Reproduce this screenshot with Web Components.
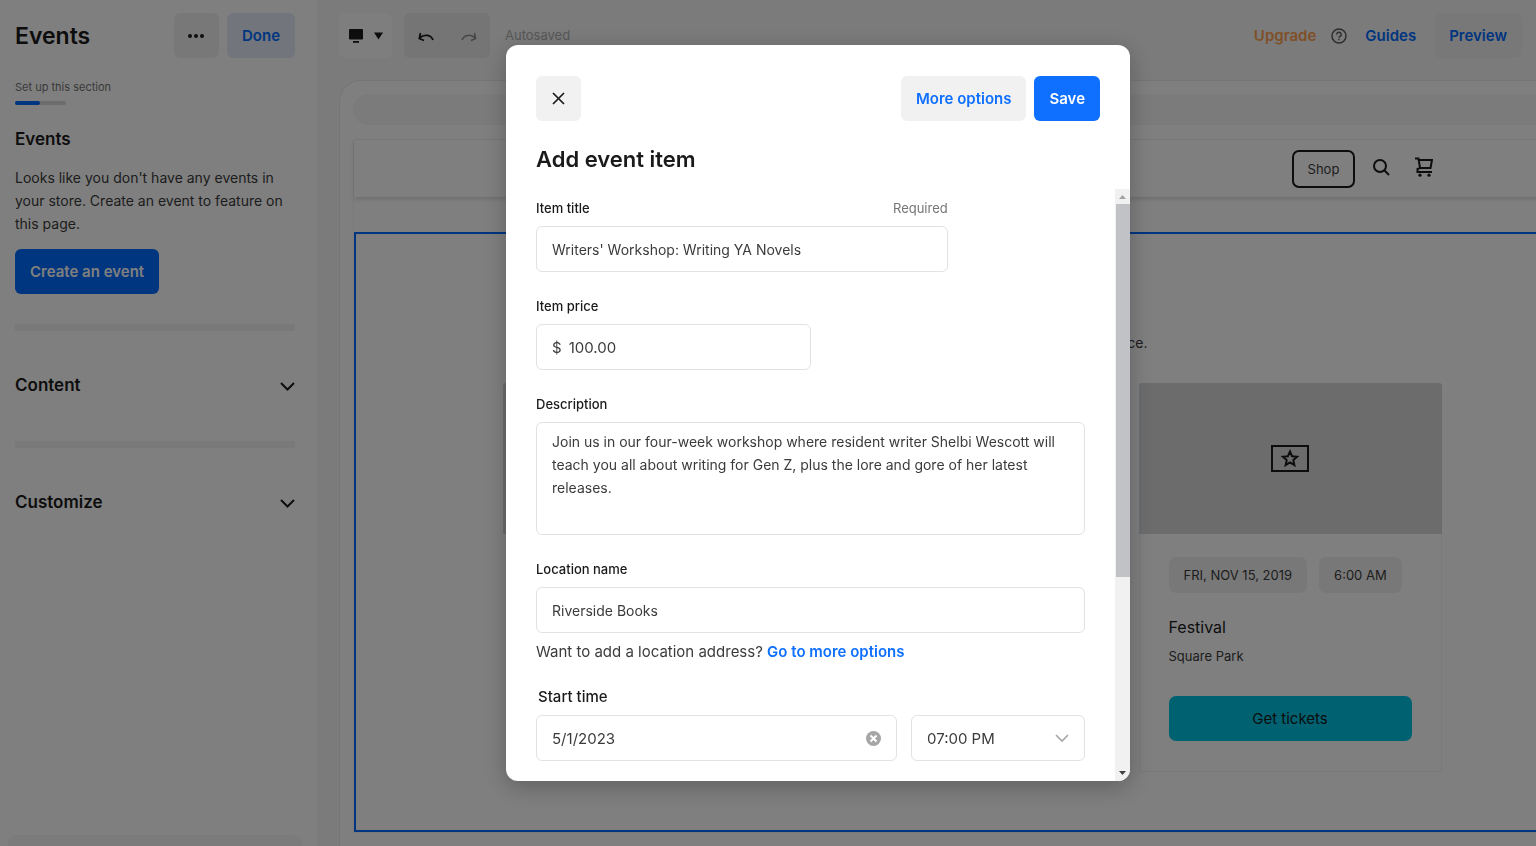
<!DOCTYPE html>
<html lang="en">
<head>
<meta charset="utf-8">
<title>Events - Site editor</title>
<style>
	html, body { height: 100%; }
	body {
		--accent: #006aff;
		margin: 0;
		overflow: hidden;
		font-family: Inter, "Liberation Sans", sans-serif;
		font-size: 15px;
		line-height: 23px;
		color: #1a1a1a;
		background: #fff;
	}
	.app { display: flex; height: 100%; }
	modal-dialog { --accent: #0f70ff; }
</style>
</head>
<body>

<div class="app">
	<side-panel heading="Events">
		<setup-card heading="Events" action="Create an event">Looks like you don't have any events in your store. Create an event to feature on this page.</setup-card>
		<panel-section>Content</panel-section>
		<panel-section>Customize</panel-section>
	</side-panel>
	<editor-area>
		<editor-toolbar slot="toolbar"></editor-toolbar>
		<site-header></site-header>
		<event-list>
			<event-card date="FRI, NOV 15, 2019" time="6:00 AM" place="Square Park">Festival</event-card>
		</event-list>
	</editor-area>
</div>

<modal-dialog heading="Add event item">
	<event-form></event-form>
</modal-dialog>

<script>
'use strict';

// every element clones its markup and styles from a template
function render(host, html) {
	const container = document.createElement('template');
	container.innerHTML = html;
	host.shadow = host.attachShadow({ mode: 'open' });
	host.shadow.appendChild(container.content.cloneNode(true));
}

const base = `
	*, *::before { box-sizing: border-box; }
	h1, h2, h3, p { margin: 0; }
	button, input, select, textarea { font: inherit; color: inherit; }
	svg { display: block; }
`;

class UiButton extends HTMLElement {
	constructor() {
		super();
		render(this, `
			<style>
				${base}
				:host { display: block; flex: none; }
				button {
					width: 100%;
					min-width: 45px;
					height: 45px;
					padding: 0 15px;
					border: 0;
					border-radius: 6px;
					display: flex;
					align-items: center;
					justify-content: center;
					font-weight: 600;
					background: #f1f1f1;
					color: var(--accent);
				}
				:host([kind="primary"]) button { background: var(--accent); color: #fff; }
				:host([kind="tint"]) button { background: #e5edf8; }
				:host([kind="icon"]) button { padding: 0; color: #1a1a1a; }
			</style>
			<button type="button"><slot></slot></button>
		`);
		if (this.hasAttribute('label')) {
			this.shadow.querySelector('button').setAttribute('aria-label', this.getAttribute('label'));
		}
	}
}
customElements.define('ui-button', UiButton);

class SidePanel extends HTMLElement {
	constructor() {
		super();
		render(this, `
			<style>
				${base}
				:host {
					box-sizing: border-box;
					display: flex;
					flex-direction: column;
					flex: none;
					width: 317px;
					padding: 13px 22px 0 15px;
					background: #fff;
				}
				header { display: flex; align-items: center; gap: 8px; }
				h1 { flex: 1; font-size: 23px; line-height: 32px; font-weight: 600; }
				.drawer { height: 11px; margin: auto -7px 0; border-radius: 8px 8px 0 0; background: #f7f7f7; }
			</style>
			<header>
				<h1></h1>
				<ui-button kind="icon" label="More actions">
					<svg width="16" height="4" fill="currentColor"><circle cx="2" cy="2" r="2"/><circle cx="8" cy="2" r="2"/><circle cx="14" cy="2" r="2"/></svg>
				</ui-button>
				<ui-button kind="tint">Done</ui-button>
			</header>
			<slot></slot>
			<div class="drawer"></div>
		`);
		this.shadow.querySelector('h1').textContent = this.getAttribute('heading');
	}
}
customElements.define('side-panel', SidePanel);

class SetupCard extends HTMLElement {
	constructor() {
		super();
		render(this, `
			<style>
				${base}
				:host { display: flex; flex-direction: column; align-items: flex-start; padding: 20px 0 30px; }
				.step { font-size: 11px; line-height: 18px; color: #757575; }
				.bar { width: 51px; height: 4px; margin: 5px 0 22px; border-radius: 2px; background: #d9d9dc; }
				.bar div { width: 25px; height: 4px; border-radius: 2px; background: var(--accent); }
				h2 { font-size: 17px; line-height: 24px; font-weight: 600; }
				p { margin: 15px 0 14px; font-size: 14px; color: #3b3b3b; }
			</style>
			<span class="step">Set up this section</span>
			<div class="bar"><div></div></div>
			<h2></h2>
			<p><slot></slot></p>
			<ui-button kind="primary"></ui-button>
		`);
		this.shadow.querySelector('h2').textContent = this.getAttribute('heading');
		this.shadow.querySelector('ui-button').textContent = this.getAttribute('action');
	}
}
customElements.define('setup-card', SetupCard);

class PanelSection extends HTMLElement {
	constructor() {
		super();
		render(this, `
			<style>
				${base}
				:host { display: block; border-top: 7px solid #f2f2f2; }
				button {
					width: 100%;
					height: 110px;
					padding: 0 0 1px;
					border: 0;
					display: flex;
					align-items: center;
					justify-content: space-between;
					background: none;
					font-size: 17px;
					font-weight: 600;
				}
			</style>
			<button type="button" aria-expanded="false">
				<slot></slot>
				<svg width="15" height="10" fill="none" stroke="currentColor" stroke-width="2"><path d="M1 2l6.500 6.500L14 2"/></svg>
			</button>
		`);
	}
}
customElements.define('panel-section', PanelSection);

class EditorArea extends HTMLElement {
	constructor() {
		super();
		render(this, `
			<style>
				${base}
				:host {
					display: flex;
					flex-direction: column;
					flex: 1;
					min-width: 0;
					overflow: hidden;
					background: #f7f7f7;
				}
				.frame {
					flex: 1;
					min-width: 1280px;
					margin: 22px 0 0 22px;
					padding: 13px;
					border: 1px solid #ebebeb;
					border-radius: 22px 0 0 0;
					background: #fff;
				}
				.address { height: 31px; border-radius: 16px; margin-bottom: 14px; background: #f7f7f7; }
				.page { width: 1238px; border: 1px solid #f5f5f5; border-radius: 4px 4px 0 0; }
			</style>
			<slot name="toolbar"></slot>
			<div class="frame">
				<div class="address"></div>
				<div class="page"><slot></slot></div>
			</div>
		`);
	}
}
customElements.define('editor-area', EditorArea);

class EditorToolbar extends HTMLElement {
	constructor() {
		super();
		render(this, `
			<style>
				${base}
				:host { display: flex; align-items: center; padding: 13px 14px 0 22px; }
				button { border: 0; background: none; padding: 0; display: flex; align-items: center; justify-content: center; }
				.device { width: 53px; height: 45px; gap: 11px; border-radius: 6px; background: #fcfcfc; }
				.history { display: flex; margin: 0 15px 0 12px; border-radius: 6px; background: #ebebeb; }
				.history button { width: 43px; height: 45px; padding-top: 3px; }
				.history button:disabled { color: #8a8a8a; }
				.status { flex: 1; font-size: 13px; color: #b0b0b0; }
				a { font-weight: 600; color: var(--accent); text-decoration: none; }
				a.upgrade { color: #ffa04f; }
				.help { margin: 0 18px 0 15px; color: #5c5c5c; }
				ui-button { margin-left: 18px; }
			</style>
			<button class="device" type="button" aria-label="Device">
				<svg width="14" height="14" fill="currentColor"><rect width="14" height="10.500" rx="1"/><rect x="4" y="12" width="6" height="1.800"/></svg>
				<svg width="9" height="8" fill="currentColor"><path d="M0 .5h9L4.500 7.500z"/></svg>
			</button>
			<div class="history">
				<button type="button" aria-label="Undo">
					<svg width="16" height="10" fill="none" stroke="currentColor" stroke-width="1.800"><path d="M15 8C13 3 6.500 1.500 1.500 6M2.500 1L1.300 6.500 6 8.500"/></svg>
				</button>
				<button type="button" aria-label="Redo" disabled>
					<svg width="16" height="10" fill="none" stroke="currentColor" stroke-width="1.400"><path d="M1 8C3 3 9.500 1.500 14.500 6M13.500 1l1.200 5.500L10 8.500"/></svg>
				</button>
			</div>
			<span class="status">Autosaved</span>
			<a class="upgrade" href="#">Upgrade</a>
			<button class="help" type="button" aria-label="Help">
				<svg width="16" height="16" fill="none" stroke="currentColor" stroke-width="1.500"><circle cx="8" cy="8" r="7"/><path d="M5.800 6.600a2.200 2.200 0 1 1 3.300 1.800c-.8.4-1.100.7-1.100 1.300"/><path d="M8 10.800v1.500"/></svg>
			</button>
			<a href="#">Guides</a>
			<ui-button>Preview</ui-button>
		`);
	}
}
customElements.define('editor-toolbar', EditorToolbar);

class SiteHeader extends HTMLElement {
	constructor() {
		super();
		render(this, `
			<style>
				${base}
				:host {
					display: flex;
					align-items: center;
					justify-content: flex-end;
					height: 57px;
					padding-right: 157px;
					box-shadow: 0 2px 5px rgba(0, 0, 0, .15);
				}
				a { width: 63px; height: 38px; border: 2px solid #1a1a1a; border-radius: 7px; text-align: center; line-height: 34px; font-size: 13px; color: #3b3b3b; text-decoration: none; }
				button { border: 0; padding: 0 0 3px; background: none; }
				.search { margin: 0 25px 0 18px; }
			</style>
			<a href="#">Shop</a>
			<button class="search" type="button" aria-label="Search">
				<svg width="17" height="17" fill="none" stroke="currentColor" stroke-width="2"><circle cx="7" cy="7" r="6"/><path d="M11.500 11.500L16 16"/></svg>
			</button>
			<button type="button" aria-label="Cart">
				<svg width="18" height="20" fill="none" stroke="currentColor" stroke-width="2"><path d="M0 1.500h3.500L5 11h10.500L17 3H4M5 11l-2.500 1v3H17"/><circle cx="5" cy="18.200" r="1.600" fill="currentColor" stroke="none"/><circle cx="14" cy="18.200" r="1.600" fill="currentColor" stroke="none"/></svg>
			</button>
		`);
	}
}
customElements.define('site-header', SiteHeader);

class EventList extends HTMLElement {
	constructor() {
		super();
		render(this, `
			<style>
				${base}
				:host {
					box-sizing: border-box;
					display: block;
					height: 600px;
					margin-top: 35px;
					padding-top: 97px;
					border: 2px solid var(--accent);
				}
				.intro { width: 351px; margin: 0 auto 29px; font-size: 14px; text-align: right; color: #3b3b3b; }
				.cards { display: grid; grid-template-columns: repeat(3, 303px); gap: 15px; justify-content: center; }
				.blank { height: 151px; border-radius: 3px 3px 0 0; background: #d8d9db; }
			</style>
			<p class="intro">Buy your tickets and save a place.</p>
			<div class="cards">
				<div class="blank"></div>
				<div class="blank"></div>
				<slot></slot>
			</div>
		`);
	}
}
customElements.define('event-list', EventList);

class EventCard extends HTMLElement {
	constructor() {
		super();
		render(this, `
			<style>
				${base}
				:host { display: block; border: 1px solid #f2f2f2; border-radius: 3px; }
				.image { display: flex; align-items: center; justify-content: center; height: 151px; margin: -1px -1px 0; border-radius: 3px 3px 0 0; background: #d8d9db; }
				.body { padding: 23px 29px 30px; display: flex; flex-direction: column; }
				.tags { display: flex; gap: 12px; font-size: 13px; white-space: nowrap; color: #3b3b3b; }
				.tags span { padding: 0 15px; line-height: 36px; border-radius: 7px; background: #f1f1f1; }
				h3 { margin-top: 22px; font-size: 16px; line-height: 24px; font-weight: 400; }
				p { margin: 6px 0 28px; font-size: 13px; color: #3b3b3b; }
				button { height: 45px; border: 0; border-radius: 7px; background: #00c3e3; }
			</style>
			<div class="image">
				<svg width="38" height="27" fill="none" stroke="#1a1a1a" stroke-width="2"><rect x="1" y="1" width="36" height="25"/><path d="M19 6.500l2.100 4.700 5 .5-3.800 3.400 1.100 5-4.400-2.600-4.400 2.600 1.100-5-3.800-3.400 5-.5z"/></svg>
			</div>
			<div class="body">
				<div class="tags"><span class="date"></span><span class="time"></span></div>
				<h3><slot></slot></h3>
				<p></p>
				<button type="button">Get tickets</button>
			</div>
		`);
		this.shadow.querySelector('.date').textContent = this.getAttribute('date');
		this.shadow.querySelector('.time').textContent = this.getAttribute('time');
		this.shadow.querySelector('p').textContent = this.getAttribute('place');
	}
}
customElements.define('event-card', EventCard);

class ModalDialog extends HTMLElement {
	constructor() {
		super();
		render(this, `
			<style>
				${base}
				:host {
					box-sizing: border-box;
					position: fixed;
					inset: 0;
					display: flex;
					justify-content: center;
					padding: 45px 0 65px 100px;
					background: rgba(0, 0, 0, .5);
				}
				section {
					display: flex;
					flex-direction: column;
					width: 624px;
					overflow: hidden;
					border-radius: 12px;
					background: #fff;
					box-shadow: 0 6px 24px rgba(0, 0, 0, .25);
				}
				header { display: flex; gap: 8px; padding: 31px 30px 0; }
				header ui-button:first-child { margin-right: auto; }
				h2 { padding: 22px 30px 14px; font-size: 22px; line-height: 32px; font-weight: 600; }
				.scroll { flex: 1; min-height: 0; display: flex; }
				.content { flex: 1; overflow: hidden; padding: 7px 30px 0; }
				.track { width: 15px; display: flex; flex-direction: column; background: #f1f1f1; }
				.track svg { flex: none; }
				.thumb { height: 63%; margin: 0 0 auto 1px; background: #c1c2c6; }
			</style>
			<section role="dialog" aria-modal="true" aria-labelledby="heading">
				<header>
					<ui-button kind="icon" label="Close">
						<svg width="13" height="13" fill="none" stroke="currentColor" stroke-width="1.700"><path d="M1 1l11 11M12 1L1 12"/></svg>
					</ui-button>
					<ui-button>More options</ui-button>
					<ui-button kind="primary">Save</ui-button>
				</header>
				<h2 id="heading"></h2>
				<div class="scroll">
					<div class="content"><slot></slot></div>
					<div class="track">
						<svg width="15" height="15" fill="#a3a3a3"><path d="M4 10h7L7.500 6z"/></svg>
						<div class="thumb"></div>
						<svg width="15" height="15" fill="#404040"><path d="M4 5h7L7.500 9z"/></svg>
					</div>
				</div>
			</section>
		`);
		this.shadow.querySelector('h2').textContent = this.getAttribute('heading');
	}
}
customElements.define('modal-dialog', ModalDialog);

class EventForm extends HTMLElement {
	constructor() {
		super();
		render(this, `
			<style>
				${base}
				:host { display: block; width: 100%; }
				form { display: flex; flex-direction: column; gap: 22px; }
				.field { display: flex; flex-direction: column; }
				.title { width: 75%; }
				.price { width: 50%; }
				.row { display: flex; justify-content: space-between; }
				label, .hint { font-size: 13px; line-height: 24px; margin-bottom: 6px; }
				label { font-weight: 500; }
				.hint { color: #757575; }
				input, select, textarea, .box {
					display: block;
					width: 100%;
					height: 46px;
					margin: 0;
					padding: 0 15px;
					border: 1px solid #e2e2e2;
					border-radius: 6px;
					background: #fff;
					font-size: 14px;
					color: #3b3b3b;
					outline: 0;
				}
				textarea { height: 113px; padding: 7px 15px; resize: none; overflow: hidden; }
				.box { display: flex; align-items: center; gap: 7px; }
				.box, .box input, select { font-size: 15px; }
				.box input { flex: 1; min-width: 0; height: 44px; padding: 0; border: 0; background: none; }
				.box button { border: 0; padding: 0; background: none; }
				.note { margin-top: 7px; color: #3b3b3b; }
				a { font-weight: 600; color: var(--accent); text-decoration: none; }
				.when { display: flex; gap: 14px; }
				.when .box { flex: 1; }
				.start label { font-size: 15px; padding-left: 2px; }
				.time { position: relative; width: 174px; }
				.time select { appearance: none; }
				.time svg { position: absolute; right: 16px; top: 19px; }
			</style>
			<form>
				<div class="field title">
					<div class="row"><label for="title">Item title</label><span class="hint">Required</span></div>
					<input id="title" type="text" value="Writers' Workshop: Writing YA Novels">
				</div>
				<div class="field price">
					<label for="price">Item price</label>
					<div class="box"><span>$</span><input id="price" type="text" value="100.00"></div>
				</div>
				<div class="field">
					<label for="description">Description</label>
					<textarea id="description">Join us in our four-week workshop where resident writer Shelbi Wescott will teach you all about writing for Gen Z, plus the lore and gore of her latest releases.</textarea>
				</div>
				<div class="field">
					<label for="location">Location name</label>
					<input id="location" type="text" value="Riverside Books">
					<p class="note">Want to add a location address? <a href="#">Go to more options</a></p>
				</div>
				<div class="field start">
					<label for="date">Start time</label>
					<div class="when">
						<div class="box">
							<input id="date" type="text" value="5/1/2023">
							<button type="button" aria-label="Clear date">
								<svg width="15" height="15"><circle cx="7.500" cy="7.500" r="7.500" fill="#a6a6a6"/><path d="M4.500 4.500l6 6M10.500 4.500l-6 6" stroke="#fff" stroke-width="2"/></svg>
							</button>
						</div>
						<div class="time">
							<select aria-label="Start hour"><option>07:00 PM</option></select>
							<svg width="14" height="9" fill="none" stroke="#a6a6a6" stroke-width="1.600"><path d="M1 1l6 6 6-6"/></svg>
						</div>
					</div>
				</div>
			</form>
		`);
	}
}
customElements.define('event-form', EventForm);
</script>
</body>
</html>
